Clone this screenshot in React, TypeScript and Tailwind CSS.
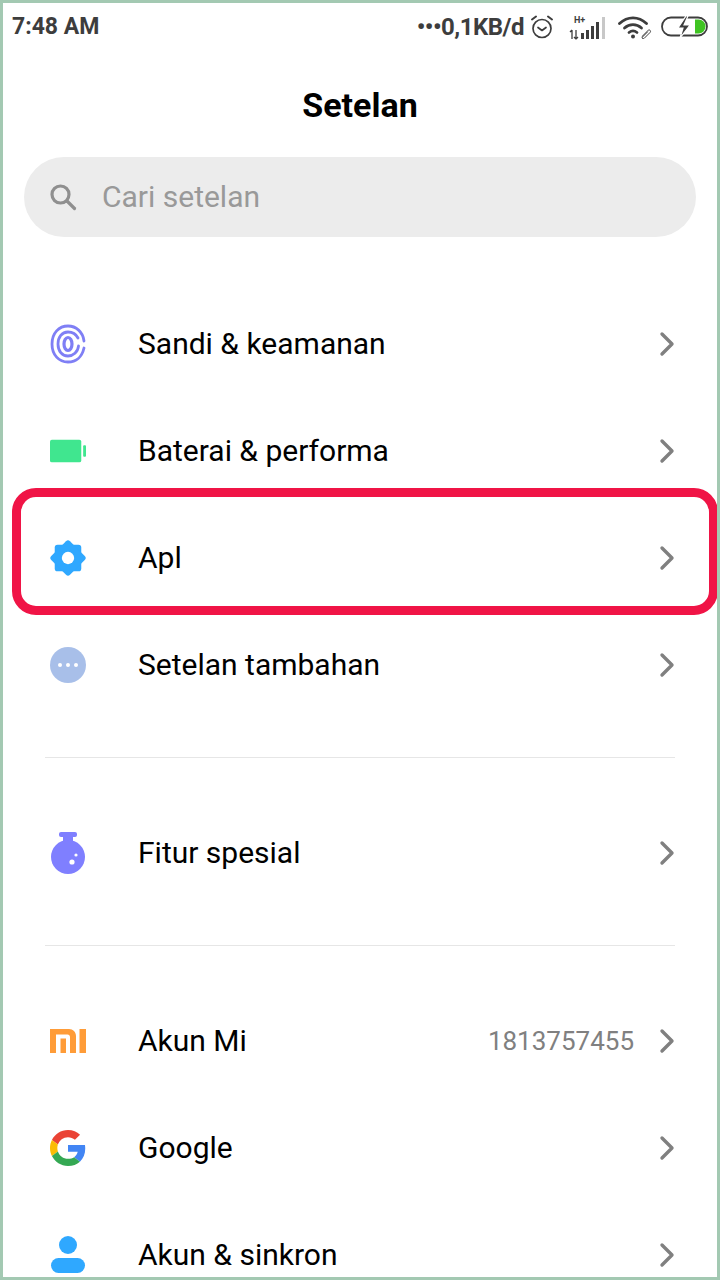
import React from 'react';

const font = { fontFamily: 'Roboto, sans-serif' };

function Chevron() {
  return (
    <svg width="16" height="26" viewBox="0 0 16 26" className="shrink-0">
      <path d="M3 3l10 10L3 23" fill="none" stroke="#808080" strokeWidth="3.4" strokeLinecap="round" strokeLinejoin="round" />
    </svg>
  );
}

function FingerprintIcon() {
  return (
    <svg width="36" height="40" viewBox="0 0 36 40" fill="none" stroke="#7f7ff5" strokeWidth="2.8" strokeLinecap="round">
      <path d="M34 17C33 8 26 2 18 2C9 2 2 9 2 20C2 31 9 38 18 38C26 38 32 33 34 24" />
      <path d="M28 14C26 10 22 8 18 8C12 8 8 13 8 20C8 27 12 32 18 32C23 32 28 28 28.500 22" />
      <ellipse cx="18" cy="20" rx="4" ry="6.500" strokeWidth="3.200" />
    </svg>
  );
}

function BatteryIcon() {
  return (
    <svg width="38" height="24" viewBox="0 0 38 24">
      <rect x="0" y="0" width="33" height="24" rx="2" fill="#40e68f" />
      <rect x="35" y="6" width="3" height="12" rx="1" fill="#40e68f" />
    </svg>
  );
}

function GearIcon() {
  return (
    <svg width="38" height="38" viewBox="0 0 38 38">
      <rect x="5" y="5" width="28" height="28" rx="3" fill="#2fa8ff" />
      <rect x="5" y="5" width="28" height="28" rx="3" fill="#2fa8ff" transform="rotate(45 19 19)" />
      <circle cx="19" cy="19" r="6.500" fill="#fff" />
    </svg>
  );
}

function MoreIcon() {
  return (
    <svg width="36" height="36" viewBox="0 0 36 36">
      <circle cx="18" cy="18" r="18" fill="#a8bfe9" />
      <circle cx="10" cy="18" r="2" fill="#fff" />
      <circle cx="18" cy="18" r="2" fill="#fff" />
      <circle cx="26" cy="18" r="2" fill="#fff" />
    </svg>
  );
}

function FlaskIcon() {
  return (
    <svg width="36" height="42" viewBox="0 0 36 42">
      <rect x="9" y="0" width="18" height="5" rx="2" fill="#7f7fff" />
      <rect x="13" y="3" width="10" height="12" fill="#7f7fff" />
      <circle cx="18" cy="25" r="17" fill="#7f7fff" />
      <circle cx="26" cy="23" r="1.600" fill="#fff" />
      <circle cx="22" cy="30" r="2.600" fill="#fff" />
    </svg>
  );
}

function MiIcon() {
  return (
    <svg width="36" height="24" viewBox="0 0 36 24" fill="#ff9c38">
      <path d="M0 0H19C23 0 26 3 26 7V24H20V8C20 6.500 19 5.500 17.500 5.500H6V24H0Z" />
      <rect x="10.500" y="9.500" width="5.500" height="14.500" />
      <rect x="29.500" y="0" width="6.500" height="24" />
    </svg>
  );
}

function GoogleIcon() {
  return (
    <svg width="36" height="36" viewBox="0 0 48 48">
      <path fill="#EA4335" d="M24 9.500c3.540 0 6.710 1.220 9.210 3.600l6.850-6.850C35.900 2.380 30.470 0 24 0 14.620 0 6.510 5.380 2.560 13.220l7.980 6.190C12.430 13.720 17.740 9.500 24 9.500z" />
      <path fill="#4285F4" d="M46.980 24.550c0-1.570-.15-3.090-.38-4.550H24v9.020h12.940c-.58 2.960-2.260 5.480-4.780 7.180l7.730 6c4.510-4.180 7.090-10.360 7.090-17.650z" />
      <path fill="#FBBC05" d="M10.530 28.590c-.48-1.450-.76-2.990-.76-4.590s.27-3.140.76-4.590l-7.980-6.190C.92 16.460 0 20.120 0 24c0 3.880.92 7.540 2.560 10.780l7.970-6.190z" />
      <path fill="#34A853" d="M24 48c6.480 0 11.930-2.130 15.890-5.810l-7.730-6c-2.150 1.450-4.920 2.300-8.160 2.300-6.260 0-11.570-4.220-13.470-9.910l-7.980 6.190C6.510 42.620 14.620 48 24 48z" />
    </svg>
  );
}

function UserIcon() {
  return (
    <svg width="36" height="38" viewBox="0 0 36 38" fill="#2fa8ff">
      <circle cx="18" cy="9" r="9" />
      <rect x="1" y="22" width="34" height="15" rx="7.500" />
    </svg>
  );
}

function AlarmIcon() {
  return (
    <svg width="24" height="26" viewBox="0 0 24 26" fill="none" stroke="#3d3d3d" strokeWidth="1.700" strokeLinecap="round" strokeLinejoin="round">
      <circle cx="12" cy="14.500" r="9" />
      <path d="M8 13.500l4 3 4-3" />
      <path d="M2 5.500L6 2.500M22 5.500L18 2.500" strokeWidth="2" />
    </svg>
  );
}

function SignalIcon() {
  return (
    <svg width="38" height="26" viewBox="0 0 38 26">
      <text x="5" y="9" fontSize="9" fontWeight="700" fill="#3d3d3d" style={font}>H+</text>
      <path d="M3 16v9M1 18l2-2M7 25v-9M5 23l2 2M9 23l-2 2" fill="none" stroke="#3d3d3d" strokeWidth="1.300" />
      <rect x="12" y="19" width="3" height="6" fill="#3d3d3d" />
      <rect x="17" y="16" width="3" height="9" fill="#3d3d3d" />
      <rect x="22" y="12" width="3" height="13" fill="#3d3d3d" />
      <rect x="27" y="8" width="3" height="17" fill="#3d3d3d" />
      <rect x="33" y="3" width="3" height="22" fill="#c8c8c8" />
    </svg>
  );
}

function WifiIcon() {
  return (
    <svg width="34" height="24" viewBox="0 0 34 24" fill="none" stroke="#3d3d3d" strokeLinecap="round">
      <path d="M1.500 8.500C9.500 1 20.500 1 28.500 8.500" strokeWidth="2.800" />
      <path d="M6.500 13C11.500 8.500 18.500 8.500 23.500 13" strokeWidth="2.800" />
      <path d="M11 17.500C13.500 15.500 16.500 15.500 19 17.500" strokeWidth="2.800" />
      <circle cx="15" cy="21.500" r="2" fill="#3d3d3d" stroke="none" />
      <path d="M24 21.500l6-6c1.500-1.500 3.500.5 2 2l-6 6c-1 1-2.500-.5-1.500-1.500l5-5" strokeWidth="1" />
    </svg>
  );
}

function ChargingIcon() {
  return (
    <svg width="48" height="22" viewBox="0 0 48 22">
      <rect x="1" y="1.500" width="45" height="18" rx="9" fill="none" stroke="#3d3d3d" strokeWidth="1.800" />
      <path d="M34 3.500h3.500a7 7 0 0 1 0 14H34Z" fill="#3fc422" />
      <path d="M25 0L17 12h5l-3 10 10-13h-6l4-9Z" fill="#3d3d3d" stroke="#fff" strokeWidth="1.200" />
    </svg>
  );
}

function SettingRow({ icon, label, value }: { icon: React.ReactNode; label: string; value?: string }) {
  return (
    <div className="flex h-[107px] items-center pl-[47px] pr-[42px]">
      <div className="flex w-[36px] shrink-0 items-center justify-center">{icon}</div>
      <span className="ml-[52px] flex-1 text-[30px] leading-none text-black">{label}</span>
      {value && <span className="mr-[25px] text-[26px] leading-none text-[#808080]">{value}</span>}
      <Chevron />
    </div>
  );
}

export default function App() {
  return (
    <div className="relative h-[1280px] w-[720px] overflow-hidden border-[3px] border-[#a3c9b2] bg-white" style={font}>
      {/* Status bar */}
      <div className="flex h-[46px] items-center pl-[9px] pr-[8px] pt-[1px] text-[#3d3d3d]">
        <span className="text-[23px] font-bold leading-none">7:48 AM</span>
        <div className="ml-auto flex items-center">
          <span className="text-[24px] font-bold leading-none tracking-[-0.5px]">•••0,1KB/d</span>
          <span className="ml-[6px] flex"><AlarmIcon /></span>
          <span className="ml-[15px] flex"><SignalIcon /></span>
          <span className="ml-[11px] flex"><WifiIcon /></span>
          <span className="ml-[9px] flex"><ChargingIcon /></span>
        </div>
      </div>

      <h1 className="mt-[35px] text-center text-[34px] font-bold leading-[42px] text-black">Setelan</h1>

      {/* Search */}
      <div className="mx-[21px] mt-[31px] flex h-[80px] items-center rounded-full bg-[#ececec] pl-[25px]">
        <svg width="28" height="28" viewBox="0 0 28 28" fill="none" stroke="#8f8f8f" strokeWidth="3.200" strokeLinecap="round">
          <circle cx="11.500" cy="11.500" r="8.500" />
          <path d="M18 18l7.500 7.500" />
        </svg>
        <span className="ml-[25px] text-[30px] leading-none text-[#999999]">Cari setelan</span>
      </div>

      <div className="mt-[53px]">
        <SettingRow icon={<FingerprintIcon />} label="Sandi & keamanan" />
        <SettingRow icon={<BatteryIcon />} label="Baterai & performa" />
        <SettingRow icon={<GearIcon />} label="Apl" />
        <SettingRow icon={<MoreIcon />} label="Setelan tambahan" />
      </div>

      <div className="mx-[42px] mt-[39px] h-px bg-[#e6e6e6]" />

      <div className="mt-[41px]">
        <SettingRow icon={<FlaskIcon />} label="Fitur spesial" />
      </div>

      <div className="mx-[42px] mt-[39px] h-px bg-[#e6e6e6]" />

      <div className="mt-[41px]">
        <SettingRow icon={<MiIcon />} label="Akun Mi" value="1813757455" />
        <SettingRow icon={<GoogleIcon />} label="Google" />
        <SettingRow icon={<UserIcon />} label="Akun & sinkron" />
      </div>

      {/* Highlight around the Apl row */}
      <div className="absolute left-[9px] top-[485px] h-[127px] w-[706px] rounded-[24px] border-[9px] border-[#f01446]" />
    </div>
  );
}
